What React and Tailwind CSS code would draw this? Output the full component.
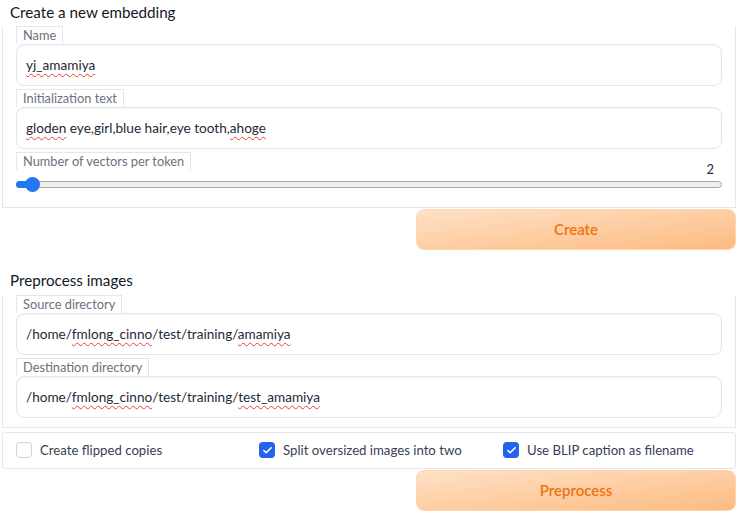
import { Check } from 'lucide-react'

function Spell({ children }) {
  return (
    <span className="underline decoration-wavy decoration-[#e0443b] decoration-1 underline-offset-[3px]">
      {children}
    </span>
  )
}

function Tag({ children }) {
  return (
    <span className="h-[18px] px-[6px] border-x border-t border-[#e5e7eb] bg-white text-[12.8px] leading-[17px] text-[#6b7280]">
      {children}
    </span>
  )
}

function Field({ label, children }) {
  return (
    <div>
      <div className="flex">
        <Tag>{label}</Tag>
      </div>
      <div className="h-[42px] flex items-center px-[9px] rounded-lg border border-[#e5e7eb] bg-white shadow-[inset_0_1px_2px_rgba(0,0,0,0.05)] text-[13.6px] text-[#1f2937]">
        <span>{children}</span>
      </div>
    </div>
  )
}

function OrangeButton({ children }) {
  return (
    <div className="flex justify-end pr-2">
      <button className="w-[320px] h-[41px] rounded-lg border border-[#fed7b0] bg-linear-to-br from-[#fee1c6] to-[#fdbb80] text-[15px] font-semibold text-[#ee730e]">
        {children}
      </button>
    </div>
  )
}

function Box({ label, checked }) {
  return (
    <label className="flex items-center gap-[8px] text-[13.2px] text-[#374151]">
      <span className={`w-[16px] h-[16px] rounded-[4px] flex items-center justify-center ${checked ? 'bg-[#2563eb]' : 'border border-[#d1d5db] bg-white'}`}>
        {checked && <Check className="w-[11px] h-[11px] text-white" strokeWidth={3.5} />}
      </span>
      {label}
    </label>
  )
}

export default function App() {
  return (
    <div className="bg-white min-h-[525px] w-[744px] font-['Lato','Liberation_Sans',sans-serif] text-[#111827]">
      {/* Create a new embedding */}
      <h2 className="pl-[10px] pt-[2px] h-[26px] text-[15.2px] leading-[20px]">Create a new embedding</h2>
      <div className="ml-[2px] w-[734px] mt-[7px] border-x border-b border-[#e5e7eb] px-[13px] pb-[15px]">
        <div className="-mt-[7px] flex flex-col gap-[3px]">
          <Field label="Name"><Spell>yj_amamiya</Spell></Field>
          <Field label="Initialization text">
            <Spell>gloden</Spell> eye,girl,blue hair,eye tooth,<Spell>ahoge</Spell>
          </Field>
          <div>
            <div className="flex justify-between h-[18px]">
              <Tag>Number of vectors per token</Tag>
              <span className="mt-[10px] mr-[8px] h-[14px] text-[13px] leading-[14px] text-[#1f2937]">2</span>
            </div>
            <div className="relative h-[15px] mt-[7px] flex items-center">
              <div className="w-full h-[7px] rounded-full border border-[#a8a8a8] bg-[#eeeeee]" />
              <div className="absolute left-0 w-[18px] h-[7px] rounded-l-full bg-[#2377f0]" />
              <div className="absolute left-[9px] w-[15px] h-[15px] rounded-full bg-[#2377f0]" />
            </div>
          </div>
        </div>
      </div>
      <div className="mt-px">
        <OrangeButton>Create</OrangeButton>
      </div>

      {/* Preprocess images */}
      <h2 className="pl-[10px] mt-[20px] h-[25px] text-[15.2px] leading-[20px]">Preprocess images</h2>
      <div className="ml-[2px] w-[734px] mt-[7px] border-x border-b border-[#e5e7eb] px-[13px] pb-[9px]">
        <div className="-mt-[7px] flex flex-col gap-[3px]">
          <Field label="Source directory">
            /home/<Spell>fmlong_cinno</Spell>/test/training/<Spell>amamiya</Spell>
          </Field>
          <Field label="Destination directory">
            /home/<Spell>fmlong_cinno</Spell>/test/training/<Spell>test_amamiya</Spell>
          </Field>
        </div>
      </div>
      <div className="ml-[2px] w-[734px] mt-[4px] h-[37px] rounded-[3px] border border-[#e5e7eb] px-[13px] flex items-center">
        <div className="w-[243px]"><Box label="Create flipped copies" /></div>
        <div className="w-[244px]"><Box label="Split oversized images into two" checked /></div>
        <div><Box label="Use BLIP caption as filename" checked /></div>
      </div>
      <div className="mt-px">
        <OrangeButton>Preprocess</OrangeButton>
      </div>
    </div>
  )
}
